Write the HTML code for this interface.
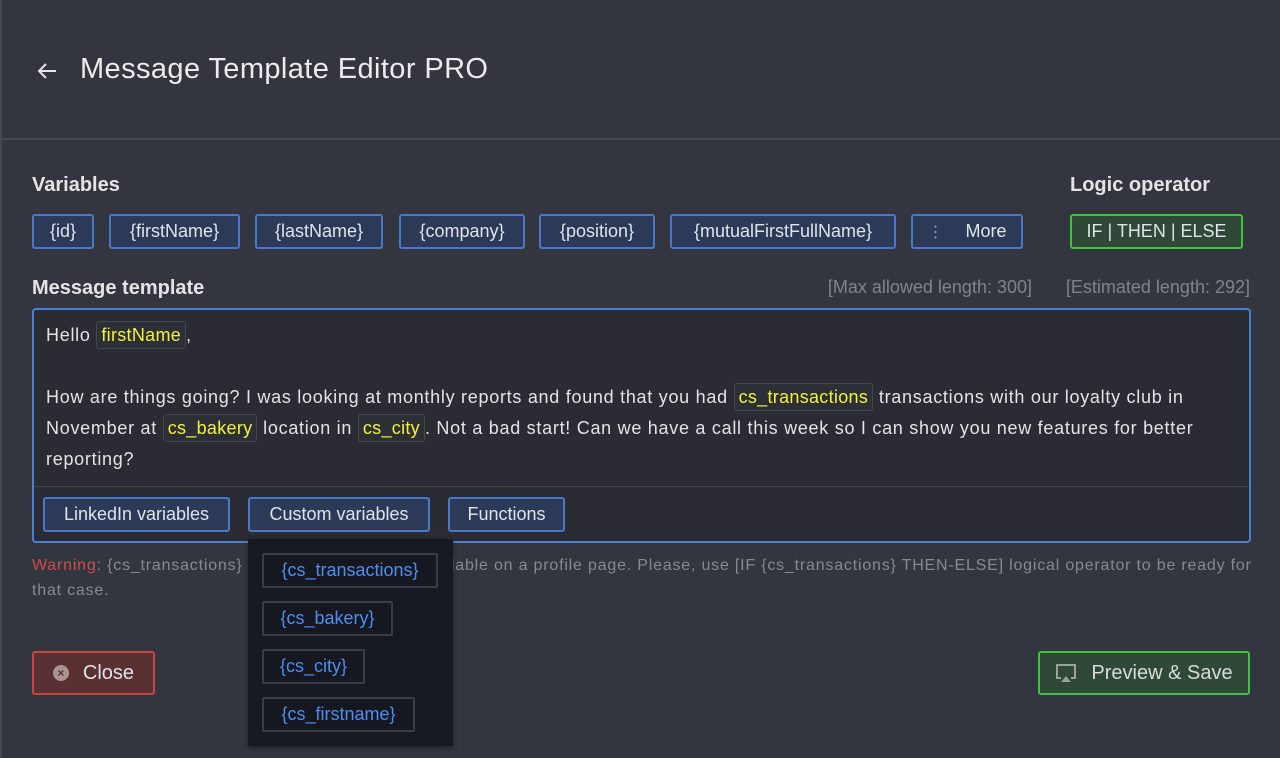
<!DOCTYPE html>
<html><head><meta charset="utf-8"><style>
*{box-sizing:border-box;margin:0;padding:0}
body{width:1280px;height:758px;background:#33363f;font-family:"Liberation Sans",sans-serif;color:#e2e2e2;position:relative;overflow:hidden}
.a{position:absolute}
.btn{position:absolute;height:35px;border:2px solid #4a78c8;background:#2c3a58;border-radius:3px;color:#dfe3ea;font-size:18px;display:flex;align-items:center;justify-content:center;white-space:nowrap}
.hl{display:inline-block;color:#f2f23a;background:#2d2f36;border:1px solid #46484f;border-radius:3px;padding:0 4px;line-height:26px;letter-spacing:0.3px}
.dd{position:absolute;left:262px;height:35px;border:2px solid #3a3d46;background:#151821;border-radius:2px;color:#4f8df0;font-size:18px;display:flex;align-items:center;justify-content:center}
</style></head><body>
<div class="a" style="left:0;top:0;width:2px;height:758px;background:#44474f"></div>
<svg class="a" style="left:36px;top:61px" width="22" height="20" viewBox="0 0 22 20"><path d="M20 10H3M10 3L3 10l7 7" stroke="#e6e6e6" stroke-width="2" fill="none"/></svg>
<div class="a" style="left:80px;top:53px;font-size:29px;color:#ececec;letter-spacing:0.4px">Message Template Editor PRO</div>
<div class="a" style="left:0;top:138px;width:1280px;height:2px;background:#454850"></div>

<div class="a" style="left:32px;top:174px;font-size:20px;font-weight:bold;color:#e4e4e4">Variables</div>
<div class="a" style="left:1070px;top:174px;font-size:20px;font-weight:bold;color:#e4e4e4">Logic operator</div>
<div class="btn" style="left:32px;top:214px;width:62px">{id}</div>
<div class="btn" style="left:109px;top:214px;width:131px">{firstName}</div>
<div class="btn" style="left:255px;top:214px;width:128px">{lastName}</div>
<div class="btn" style="left:399px;top:214px;width:126px">{company}</div>
<div class="btn" style="left:539px;top:214px;width:116px">{position}</div>
<div class="btn" style="left:670px;top:214px;width:226px">{mutualFirstFullName}</div>
<div class="btn" style="left:911px;top:214px;width:112px"><span style="color:#9aa3b5;margin-right:22px;font-size:16px">⋮</span>More</div>
<div class="btn" style="left:1070px;top:214px;width:173px;border-color:#3fc43f;background:#2f4838">IF | THEN | ELSE</div>

<div class="a" style="left:32px;top:277px;font-size:20px;font-weight:bold;color:#e4e4e4">Message template</div>
<div class="a" style="right:248px;top:277px;font-size:18px;color:#80838c">[Max allowed length: 300]</div>
<div class="a" style="right:30px;top:277px;font-size:18px;color:#80838c">[Estimated length: 292]</div>

<div class="a" style="left:32px;top:308px;width:1219px;height:235px;border:2px solid #4a7fd8;border-radius:4px;background:#2a2b33"></div>
<div class="a" style="left:34px;top:486px;width:1215px;height:1px;background:#43454c"></div>
<div class="a" style="left:46px;top:320px;width:1200px;font-size:18px;line-height:31px;color:#e4e4e4;letter-spacing:0.72px;white-space:nowrap">
Hello <span class="hl">firstName</span>,<br><br>
How are things going? I was looking at monthly reports and found that you had <span class="hl">cs_transactions</span> transactions with our loyalty club in<br>November at <span class="hl">cs_bakery</span> location in <span class="hl">cs_city</span>. Not a bad start! Can we have a call this week so I can show you new features for better<br>reporting?
</div>
<div class="btn" style="left:43px;top:497px;width:187px">LinkedIn variables</div>
<div class="btn" style="left:248px;top:497px;width:182px">Custom variables</div>
<div class="btn" style="left:448px;top:497px;width:117px">Functions</div>

<div class="a" style="left:32px;top:553px;width:1230px;font-size:16px;line-height:25px;color:#868991;letter-spacing:0.8px;white-space:nowrap"><span style="color:#d24b4b">Warning</span>: {cs_transactions} variable might not be available on a profile page. Please, use [IF {cs_transactions} THEN-ELSE] logical operator to be ready for<br>that case.</div>

<div class="a" style="left:248px;top:539px;width:205px;height:207px;background:#161922;border-radius:2px;box-shadow:0 2px 6px rgba(0,0,0,.4)"></div>
<div class="dd" style="top:553px;width:176px">{cs_transactions}</div>
<div class="dd" style="top:601px;width:131px">{cs_bakery}</div>
<div class="dd" style="top:649px;width:103px">{cs_city}</div>
<div class="dd" style="top:697px;width:153px">{cs_firstname}</div>

<div class="btn" style="left:32px;top:651px;width:123px;height:44px;border-color:#c94545;background:#5a3132;font-size:20px"><span style="display:inline-block;width:16px;height:16px;border-radius:50%;background:#a89494;color:#5a3132;font-size:12px;line-height:16px;text-align:center;margin-right:14px;font-weight:bold">×</span>Close</div>
<div class="btn" style="left:1038px;top:651px;width:212px;height:44px;border-color:#3fc43f;background:#2f4838;font-size:20px;color:#d8dcd8"><svg width="22" height="20" viewBox="0 0 22 20" style="margin-right:14px"><path d="M6 15H2V2h18v13h-4" stroke="#9aa29a" stroke-width="2" fill="none"/><path d="M6 19l5-6 5 6z" fill="#9aa29a"/></svg>Preview &amp; Save</div>
</body></html>
